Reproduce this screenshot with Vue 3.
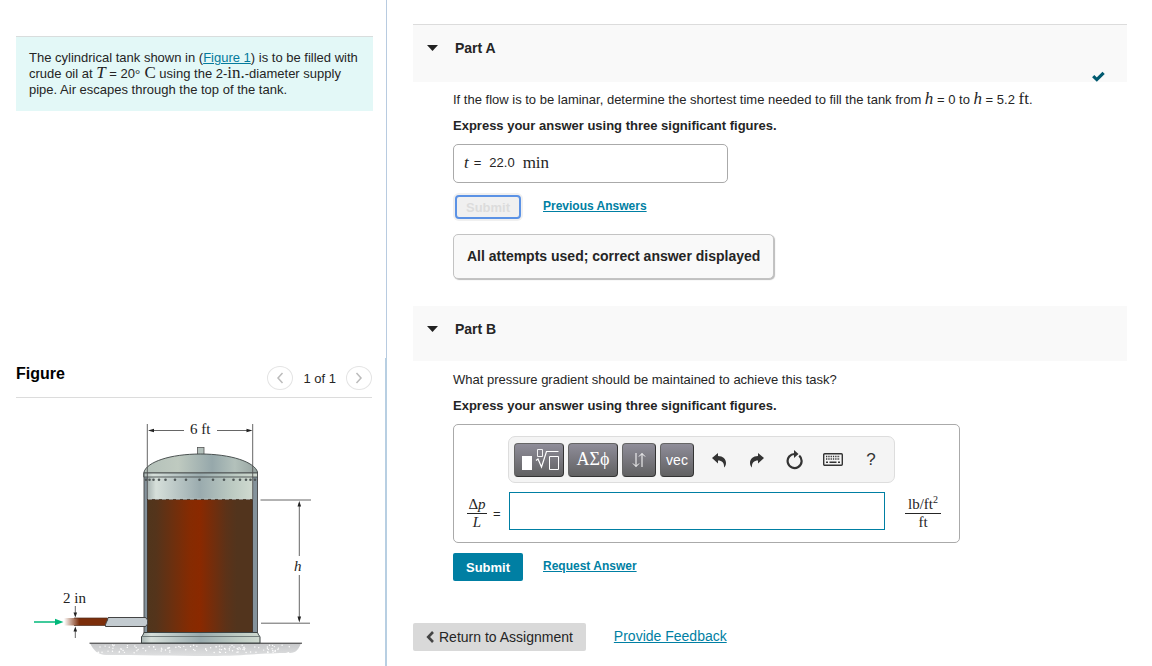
<template>
  <div class="page">
    <aside class="sidebar">
      <section class="intro-pane">
        <p class="intro">
          The cylindrical tank shown in (<a href="#figure">Figure 1</a>) is to be filled with crude oil at
          <i class="math">T</i> = 20<span class="math"><span class="degree">°</span> C</span> using the 2-<span class="math">in.</span>-diameter supply pipe. Air escapes through the top of the tank.
        </p>
      </section>

      <section id="figure" class="figure-pane">
        <header class="figure-header">
          <h2>Figure</h2>
          <nav class="pager">
            <button type="button" class="pager-button" aria-label="Previous figure">
              <svg width="8" height="12" viewBox="0 0 8 12"><path d="M6.500 1 2 6l4.500 5" /></svg>
            </button>
            <span>1 of 1</span>
            <button type="button" class="pager-button" aria-label="Next figure">
              <svg width="8" height="12" viewBox="0 0 8 12"><path d="M1.500 1 6 6l-4.500 5" /></svg>
            </button>
          </nav>
        </header>

        <svg class="tank" viewBox="16 398 356 268" role="img" aria-label="Cylindrical tank filled through a supply pipe">
          <defs>
            <linearGradient id="oil">
              <stop offset="0" stop-color="#50351c" />
              <stop offset="0.08" stop-color="#54341b" />
              <stop offset="0.4" stop-color="#852b02" />
              <stop offset="0.5" stop-color="#8a2900" />
              <stop offset="0.75" stop-color="#5c3218" />
              <stop offset="0.85" stop-color="#52341d" />
              <stop offset="1" stop-color="#52341d" />
            </linearGradient>
            <linearGradient id="steel">
              <stop offset="0" stop-color="#a9b5b3" />
              <stop offset="0.08" stop-color="#d6dfda" />
              <stop offset="0.5" stop-color="#9aabae" />
              <stop offset="0.8" stop-color="#bccac2" />
              <stop offset="1" stop-color="#d0dad0" />
            </linearGradient>
            <linearGradient id="dome">
              <stop offset="0" stop-color="#b3c0b9" />
              <stop offset="0.3" stop-color="#bfcac0" />
              <stop offset="0.6" stop-color="#96a8ab" />
              <stop offset="0.8" stop-color="#b3c1bb" />
              <stop offset="1" stop-color="#95a29f" />
            </linearGradient>
            <linearGradient id="jet">
              <stop offset="0" stop-color="#7c2e0b" stop-opacity="0" />
              <stop offset="0.35" stop-color="#7c2e0b" />
              <stop offset="1" stop-color="#7c2e0b" />
            </linearGradient>
            <linearGradient id="ground" x2="0" y2="1">
              <stop offset="0" stop-color="#c6c7c9" />
              <stop offset="1" stop-color="#dedfe0" />
            </linearGradient>
          </defs>

          <!-- ground -->
          <path d="M90 643h211c-2 6-5 10-11 10-30 0-45 3-80 3-40 0-72-1-104-1-8 0-13-5-16-12z" fill="url(#ground)" />
          <circle v-for="(s, i) in specks" :key="i" :cx="s.x" :cy="s.y" r="0.7" fill="#fff" />
          <path d="M89.500 643.200H302" stroke="#333" />

          <!-- tank -->
          <rect x="197.500" y="447.500" width="6.500" height="8" fill="#b3c0bb" stroke="#555" stroke-width="0.8" />
          <path d="M144 477v-5c3-10 26-18 56.500-18s54 8 57 18v5z" fill="url(#dome)" stroke="#3c4343" stroke-width="0.9" />
          <rect x="144" y="473" width="113.500" height="160" fill="#84929b" stroke="#444" stroke-width="0.9" />
          <rect x="147.500" y="477" width="105.500" height="23" fill="url(#steel)" />
          <rect x="144" y="473" width="113.500" height="4" fill="url(#steel)" stroke="#4a5050" stroke-width="0.9" />
          <circle v-for="x in rivets" :key="x" :cx="x" cy="479.800" r="1.300" fill="#4f5757" />
          <rect x="147.500" y="499.500" width="105" height="133" fill="url(#oil)" stroke="#36241a" stroke-width="0.7" />
          <path d="M148 499.200h105" stroke="#dfe5e2" stroke-width="0.6" stroke-dasharray="4 3" />
          <path d="M144 632.500h113.500c1 2 1 3 2.500 4v6.500H141.500v-6.500c1.500-1 1.500-2 2.500-4z" fill="url(#steel)" stroke="#3c4343" />
          <path d="M142 636.500h118" stroke="#5d6868" stroke-width="0.8" />

          <!-- supply pipe -->
          <rect x="64" y="618" width="44" height="7.500" fill="url(#jet)" />
          <path d="M74 618h33M74 625.500h32" stroke="#4d2c1d" stroke-width="0.7" />
          <path d="M108 617.500h37c3.500 0 3.500 9 0 9h-39.500c-1-2 2.500-6 2.500-9z" fill="#c3cbd0" stroke="#444" />
          <path d="M34 622h23" stroke="#00b87a" stroke-width="1.500" />
          <path d="M63.500 622 55 618.800v6.400z" fill="#00b87a" />

          <!-- dimensions -->
          <g stroke="#555" stroke-width="0.9">
            <path d="M147.300 424v75M252.700 424v75" />
            <path d="M150 430.500h34M217 430.500h34" />
            <path d="M260.500 500H311M261 623.200h49" />
            <path d="M299.300 503v53M299.300 575v45" />
            <path d="M75.300 606v8M75.300 630v8" />
          </g>
          <g fill="#222">
            <path d="m148 430.500 6-1.700v3.400zM252.500 430.500l-6-1.700v3.400z" />
            <path d="m299.300 501-1.800 5.500h3.600zM299.300 622.500l-1.800-6h3.600z" />
            <path d="m75.300 617.500-1.800-5h3.600zM75.300 626.500l-1.800 5h3.600z" />
          </g>
          <g class="dimension-text">
            <text x="190" y="434">6 ft</text>
            <text x="63" y="603">2 in</text>
            <text x="294" y="571" font-style="italic">h</text>
          </g>
        </svg>
      </section>
    </aside>

    <main class="content">
      <section>
        <header class="part-header part-header-first">
          <svg class="caret" width="11" height="6" viewBox="0 0 11 6"><path d="M0 0h11L5.500 6z" fill="#222" /></svg>
          <h2>Part A</h2>
          <svg class="correct" width="13" height="11" viewBox="0 0 13 11"><path d="m1.200 5.200 3.600 3.400L11.600 1.800" fill="none" stroke="#005a70" stroke-width="3.200" /></svg>
        </header>
        <div class="part-body">
          <p class="question">
            If the flow is to be laminar, determine the shortest time needed to fill the tank from
            <i class="math">h</i> = 0 to <i class="math">h</i> = 5.2 <span class="math">ft</span>.
          </p>
          <p class="instruction">Express your answer using three significant figures.</p>
          <div class="answer">
            <i class="math">t</i><span class="equals">=</span><span>22.0</span><span class="math answer-unit">min</span>
          </div>
          <div class="actions">
            <button type="button" class="submit submit-used">Submit</button>
            <a href="#previous">Previous Answers</a>
          </div>
          <p class="feedback">All attempts used; correct answer displayed</p>
        </div>
      </section>

      <section>
        <header class="part-header">
          <svg class="caret" width="11" height="6" viewBox="0 0 11 6"><path d="M0 0h11L5.500 6z" fill="#222" /></svg>
          <h2>Part B</h2>
        </header>
        <div class="part-body part-body-open">
          <p class="question">What pressure gradient should be maintained to achieve this task?</p>
          <p class="instruction">Express your answer using three significant figures.</p>
          <div class="editor">
            <div class="toolbar">
              <button type="button" class="key key-wide" aria-label="Templates">
                <svg width="40" height="24" viewBox="0 0 40 24" fill="none" stroke="#fff">
                  <path d="M3 8h10v14H3z" fill="#fff" stroke="none" />
                  <path d="M18.500 1.500h5v7h-5z" stroke-width="0.9" />
                  <path d="m17 12.500 2-1.500 3.500 8 5-15.500h12" stroke-width="1.200" />
                  <path d="M30.500 8.500h9v13h-9z" />
                </svg>
              </button>
              <button type="button" class="key key-wide key-greek">ΑΣϕ</button>
              <button type="button" class="key" aria-label="Subscripts and superscripts">
                <svg width="14" height="16" viewBox="0 0 14 16" fill="none" stroke="#fff">
                  <path d="M4 1v13.500M1 11.500l3 3 3-3M10 15V1.500M7 4.500l3-3 3 3" />
                </svg>
              </button>
              <button type="button" class="key">vec</button>
              <button type="button" class="tool" aria-label="Undo">
                <svg width="14" height="16" viewBox="0 0 14 16"><path d="M0 6 6 1v3c5 0 8 3 8 7 0 2-1 4-2 4.500C12.500 11 10 8.500 6 8.500v3z" fill="#333" /></svg>
              </button>
              <button type="button" class="tool" aria-label="Redo">
                <svg width="14" height="16" viewBox="0 0 14 16"><path d="M14 6 8 1v3c-5 0-8 3-8 7 0 2 1 4 2 4.500C1.500 11 4 8.500 8 8.500v3z" fill="#333" /></svg>
              </button>
              <button type="button" class="tool" aria-label="Reset">
                <svg width="18" height="20" viewBox="0 0 18 20"><path d="M13.200 5.700A7 7 0 1 1 9 4" fill="none" stroke="#333" stroke-width="2.200" /><path d="m8 0 4.500 4L8 8z" fill="#333" /></svg>
              </button>
              <button type="button" class="tool" aria-label="Keyboard shortcuts">
                <svg width="20" height="13" viewBox="0 0 20 13" fill="none" stroke="#333">
                  <rect x="0.700" y="0.700" width="18.600" height="11.600" rx="1" stroke-width="1.400" />
                  <path d="M3 3.500h14M3 6h14" stroke-width="1.500" stroke-dasharray="1.300 1" />
                  <path d="M3 9.200h2M6.500 9.200h7M15 9.200h2" stroke-width="1.500" />
                </svg>
              </button>
              <button type="button" class="tool tool-help" aria-label="Help">?</button>
            </div>
            <div class="equation">
              <label class="fraction" for="gradient">
                <span>Δ<i>p</i></span>
                <i class="denominator">L</i>
              </label>
              <span class="equation-equals">=</span>
              <input id="gradient" v-model="gradient" type="text" autocomplete="off" />
              <span class="fraction unit">
                <span>lb/ft<sup>2</sup></span>
                <span class="denominator">ft</span>
              </span>
            </div>
          </div>
          <div class="actions">
            <button type="button" class="submit">Submit</button>
            <a href="#request">Request Answer</a>
          </div>
        </div>
      </section>

      <footer class="page-footer">
        <button type="button" class="return">
          <svg width="8" height="12" viewBox="0 0 8 12"><path d="M7 1 2.200 6 7 11" fill="none" stroke="#444" stroke-width="2.600" /></svg>
          Return to Assignment
        </button>
        <a href="#feedback">Provide Feedback</a>
      </footer>
    </main>
  </div>
</template>

<script setup>
import { ref } from 'vue'

const gradient = ref('')

// Rivets bunch up towards the edges of the shell
const rivets = [146, 149.5, 153.5, 159, 165.5, 175, 186, 199.5, 213, 224, 233.5, 240, 246, 250.5, 255]

// Stippling of the ground under the tank, scattered with a fixed seed
function scatter(count) {
  let seed = 7
  const next = () => {
    seed = (seed * 16807) % 2147483647
    return seed / 2147483647
  }
  return Array.from({ length: count }, () => ({
    x: 98 + next() * 192,
    y: 645 + next() * 8
  }))
}

const specks = scatter(110)
</script>

<style>
body {
  margin: 0;
  background: #fff;
}
</style>

<style scoped>
.page {
  display: flex;
  min-height: 100vh;
  font-family: "Liberation Sans", Arial, sans-serif;
  font-size: 13px;
  line-height: 16px;
  color: #252525;
}

h2,
p {
  margin: 0;
}

button {
  font-family: inherit;
  cursor: pointer;
}

a {
  color: #007fa3;
}

.math {
  font-family: "Liberation Serif", serif;
  font-size: 17px;
  line-height: 0;
}

.degree {
  font-size: 13px;
}

.sidebar {
  display: flex;
  flex-direction: column;
  flex: 0 0 387px;
  box-sizing: border-box;
}

.intro-pane {
  flex: 1;
  padding: 36px 13px 0 16px;
  border-right: 1px solid #b8cbe0;
}

.intro {
  padding: 13px 12px 13px 13px;
  background: #e3f8f7;
  border-top: 1px solid #d9dddd;
}

.intro a {
  color: #047a9c;
}

.figure-pane {
  padding: 0 13px 0 16px;
  border-right: 2px solid #b8cfe2;
}

.figure-header {
  display: flex;
  justify-content: space-between;
  height: 39px;
  border-bottom: 1px solid #dcdcdc;
}

.figure-header h2 {
  padding-top: 6px;
  font-size: 16px;
  line-height: 20px;
  color: #000;
}

.pager {
  display: flex;
  align-items: center;
  gap: 10px;
}

.pager span {
  padding-top: 3px;
}

.pager-button {
  display: flex;
  align-items: center;
  justify-content: center;
  width: 26px;
  height: 24px;
  padding: 0;
  border: 1px solid #e4e4e4;
  border-radius: 50%;
  background: #fff;
}

.pager-button path {
  fill: none;
  stroke: #bbb;
  stroke-width: 1.5;
}

.tank {
  display: block;
  width: 100%;
}

.dimension-text {
  font-family: "Liberation Serif", serif;
  font-size: 15px;
  fill: #222;
}

.content {
  flex: 1;
  min-width: 0;
  padding: 24px 25px 0 26px;
}

.part-header {
  display: flex;
  align-items: flex-start;
  height: 40px;
  padding: 15px 22px 0 14px;
  background: #f9f9f9;
}

.part-header-first {
  height: 42px;
  border-top: 1px solid #dcdcdc;
}

.part-header h2 {
  flex: 1;
  font-size: 14px;
  line-height: 16px;
}

.caret {
  margin: 5px 17px 0 0;
}

.correct {
  align-self: flex-end;
}

.part-body {
  padding: 10px 0 27px 40px;
}

.part-body-open {
  padding-top: 11px;
}

.question {
  margin-bottom: 10px;
}

.instruction {
  font-weight: bold;
  margin-bottom: 10px;
}

.answer {
  display: flex;
  align-items: center;
  box-sizing: border-box;
  width: 275px;
  height: 39px;
  padding: 0 10px 2px;
  border: 1px solid #aaa;
  border-radius: 5px;
}

.equals {
  margin: 0 8px 0 5px;
}

.answer-unit {
  margin-left: 8px;
}

.actions {
  display: flex;
  align-items: center;
  gap: 20px;
  margin-top: 10px;
}

.actions a {
  padding-bottom: 2px;
  font-size: 12px;
  font-weight: bold;
}

.submit {
  width: 70px;
  height: 28px;
  padding: 0;
  border: none;
  border-radius: 2px;
  background: #007fa3;
  color: #fff;
  font-size: 13px;
  font-weight: bold;
}

.submit-used {
  border-radius: 6px;
  background: #f0f0f0;
  color: #dcdcdc;
  outline: 2px solid #5b92e5;
  outline-offset: -4px;
}

.feedback {
  width: fit-content;
  margin-top: 13px;
  padding: 13px 13px 14px;
  border: 1px solid #c3c3c3;
  border-radius: 5px;
  background: #f9f9f9;
  box-shadow: 1px 1px 1px #bbb;
  font-size: 14px;
  font-weight: bold;
}

.editor {
  box-sizing: border-box;
  width: 507px;
  padding: 11px 13px;
  border: 1px solid #aaa;
  border-radius: 5px;
}

.toolbar {
  display: flex;
  align-items: center;
  gap: 4px;
  box-sizing: border-box;
  width: 387px;
  height: 47px;
  margin-left: 41px;
  padding: 0 5px;
  border: 1px solid #ddd;
  border-radius: 7px;
  background: #f4f4f4;
}

.key {
  display: flex;
  align-items: center;
  justify-content: center;
  width: 34px;
  height: 34px;
  padding: 0;
  border: 1px solid #333;
  border-top-color: #666;
  border-left-color: #666;
  border-radius: 4px;
  background: linear-gradient(#8f8d99, #616162);
  color: #fff;
  font-size: 14px;
}

.key-wide {
  width: 50px;
}

.key-greek {
  font-family: "Liberation Serif", serif;
  font-size: 18px;
}

.tool {
  display: flex;
  align-items: center;
  justify-content: center;
  width: 34px;
  height: 34px;
  padding: 0;
  border: none;
  background: none;
  color: #333;
}

.key + .tool {
  margin-left: 4px;
}

.tool-help {
  font-size: 17px;
}

.equation {
  display: flex;
  align-items: flex-start;
  margin-top: 9px;
}

.equation input {
  box-sizing: border-box;
  width: 376px;
  height: 38px;
  padding: 0 8px;
  border: 1px solid #007fa3;
  outline: none;
  font-size: 14px;
}

.equation-equals {
  width: 16px;
  margin: 14px 0 0 6px;
}

.fraction {
  display: flex;
  flex-direction: column;
  width: 20px;
  padding-top: 4px;
  font-family: "Liberation Serif", serif;
  font-size: 15px;
  line-height: 17px;
  text-align: center;
}

.denominator {
  border-top: 1px solid #252525;
}

.fraction sup {
  font-size: 10px;
  line-height: 0;
}

.unit {
  width: 36px;
  margin-left: 20px;
}

.page-footer {
  display: flex;
  align-items: center;
  gap: 28px;
  margin-top: 15px;
  font-size: 14px;
}

.page-footer a {
  padding-bottom: 2px;
}

.return {
  display: flex;
  align-items: center;
  gap: 5px;
  height: 28px;
  padding: 0 13px;
  border: none;
  border-radius: 2px;
  background: #d9d9d9;
  color: #252525;
  font-size: 14px;
}
</style>
